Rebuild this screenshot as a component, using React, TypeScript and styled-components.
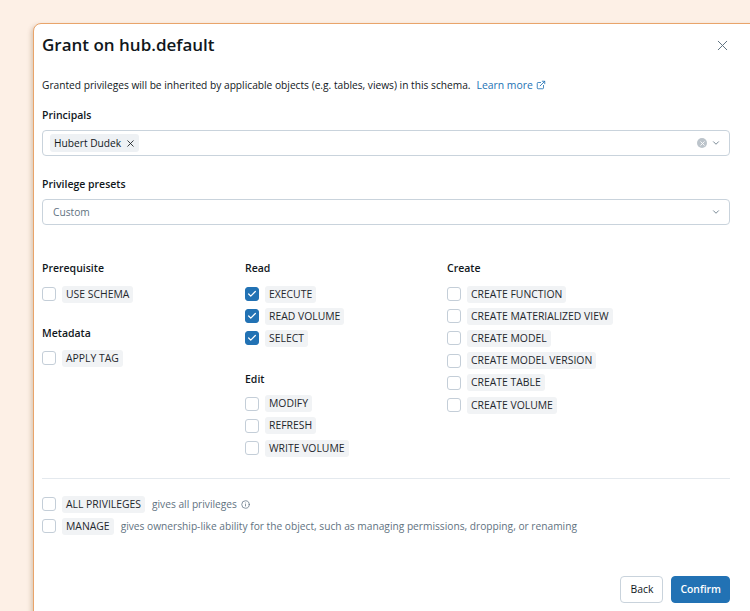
import React from "react";
import styled, { createGlobalStyle } from "styled-components";
import { X, ExternalLink, ChevronDown, Check, Info } from "lucide-react";

const GlobalStyle = createGlobalStyle`
  html, body {
    margin: 0;
    padding: 0;
    background: #fdf0e6;
    overflow: hidden;
  }
  body {
    font-family: "Open Sans", "Noto Sans", "Liberation Sans", sans-serif;
    color: #11171c;
    font-size: 11px;
  }
`;

const Modal = styled.div`
  margin: 23px 0 0 33px;
  width: 760px;
  height: 640px;
  box-sizing: border-box;
  padding: 9px 0 0 8px;
  background: #fff;
  border: 1px solid #e9a46a;
  border-radius: 8px;
  box-shadow: -2px 2px 4px rgba(120, 80, 40, 0.25);
`;

const Content = styled.div`
  width: 688px;
`;

const Header = styled.div`
  display: flex;
  align-items: center;
  justify-content: space-between;
  height: 24px;
`;

const Title = styled.h1`
  margin: 0;
  font-size: 17px;
  font-weight: 600;
  line-height: 24px;
  color: #11171c;
`;

const CloseButton = styled.button`
  border: none;
  background: none;
  padding: 0;
  display: flex;
  color: #5f7281;
  margin-right: -1px;
`;

const Description = styled.p`
  margin: 20px 0 0;
  line-height: 16px;
  font-size: 10.2px;
`;

const Link = styled.a`
  color: #2272b4;
  text-decoration: none;
  margin-left: 6px;
  display: inline-flex;
  align-items: center;
  gap: 3px;
  font-size: 10.4px;
`;

const Label = styled.div<{ $top: number }>`
  margin-top: ${(p) => p.$top}px;
  font-weight: 600;
  line-height: 16px;
  font-size: 10.5px;
`;

const Field = styled.div`
  margin-top: 7px;
  height: 26px;
  box-sizing: border-box;
  border: 1px solid #c9d3dc;
  border-radius: 4px;
  display: flex;
  align-items: center;
  padding: 0 8px 0 7px;
`;

const Chip = styled.span`
  display: inline-flex;
  align-items: center;
  gap: 4px;
  height: 18px;
  padding: 0 3px 0 4px;
  background: #eef1f4;
  border-radius: 3px;
  font-size: 10.2px;
`;

const Placeholder = styled.span`
  color: #5f7281;
  padding-left: 3px;
  font-size: 10.2px;
`;

const Icons = styled.span`
  margin-left: auto;
  display: flex;
  align-items: center;
  gap: 4px;
  color: #5f7281;
`;

const ClearDot = styled.span`
  width: 10px;
  height: 10px;
  border-radius: 50%;
  background: #bcc4cb;
  display: flex;
  align-items: center;
  justify-content: center;
  color: #fff;
`;

const Columns = styled.div`
  margin-top: 35px;
  display: grid;
  grid-template-columns: 203px 202px 1fr;
  align-items: start;
`;

const Group = styled.div<{ $top?: number }>`
  margin-top: ${(p) => p.$top ?? 0}px;
`;

const GroupTitle = styled.div<{ $gap: number }>`
  font-weight: 600;
  line-height: 16px;
  font-size: 10.5px;
  margin-bottom: ${(p) => p.$gap}px;
`;

const Row = styled.label`
  display: flex;
  align-items: center;
  gap: 6px;
  height: 22.2px;
`;

const Box = styled.span<{ $checked?: boolean }>`
  width: 14px;
  height: 14px;
  box-sizing: border-box;
  border-radius: 3px;
  border: 1px solid ${(p) => (p.$checked ? "#2272b4" : "#c4ced8")};
  background: ${(p) => (p.$checked ? "#2272b4" : "#fff")};
  display: flex;
  align-items: center;
  justify-content: center;
  color: #fff;
  flex-shrink: 0;
`;

const Tag = styled.span`
  background: #f1f3f5;
  border-radius: 3px;
  padding: 0 4px;
  height: 17px;
  line-height: 17px;
  font-size: 10.4px;
  color: #1f272d;
`;

const Hint = styled.span`
  color: #5f7281;
  font-size: 10.2px;
  display: inline-flex;
  align-items: center;
  gap: 4px;
  margin-left: 1px;
`;

const Divider = styled.hr`
  margin: 19px 0 14px;
  border: none;
  border-top: 1px solid #e4e9ee;
`;

const Footer = styled.div`
  margin-top: 38px;
  display: flex;
  justify-content: flex-end;
  gap: 8px;
`;

const Button = styled.button<{ $primary?: boolean }>`
  height: 27px;
  padding: 0 ${(p) => (p.$primary ? 8 : 9)}px;
  border-radius: 4px;
  font-family: inherit;
  font-size: 10.4px;
  border: 1px solid ${(p) => (p.$primary ? "#2272b4" : "#c9d3dc")};
  background: ${(p) => (p.$primary ? "#2272b4" : "#fff")};
  color: ${(p) => (p.$primary ? "#fff" : "#11171c")};
  font-weight: ${(p) => (p.$primary ? 600 : 400)};
`;

type Priv = { name: string; checked?: boolean };

function Priv({ name, checked }: Priv) {
  return (
    <Row>
      <Box $checked={checked}>{checked && <Check size={10} strokeWidth={3} />}</Box>
      <Tag>{name}</Tag>
    </Row>
  );
}

function PrivGroup({
  title,
  items,
  top,
  gap = 7,
}: {
  title: string;
  items: Priv[];
  top?: number;
  gap?: number;
}) {
  return (
    <Group $top={top}>
      <GroupTitle $gap={gap}>{title}</GroupTitle>
      {items.map((i) => (
        <Priv key={i.name} {...i} />
      ))}
    </Group>
  );
}

export default function App() {
  return (
    <>
      <GlobalStyle />
      <Modal>
        <Content>
          <Header>
            <Title>Grant on hub.default</Title>
            <CloseButton>
              <X size={17} strokeWidth={1.4} />
            </CloseButton>
          </Header>
          <Description>
            Granted privileges will be inherited by applicable objects (e.g. tables, views) in this
            schema.
            <Link>
              Learn more <ExternalLink size={10} />
            </Link>
          </Description>

          <Label $top={14}>Principals</Label>
          <Field>
            <Chip>
              Hubert Dudek <X size={11} strokeWidth={1.8} />
            </Chip>
            <Icons>
              <ClearDot>
                <X size={7} strokeWidth={3} />
              </ClearDot>
              <ChevronDown size={10} strokeWidth={2} />
            </Icons>
          </Field>

          <Label $top={20}>Privilege presets</Label>
          <Field>
            <Placeholder>Custom</Placeholder>
            <Icons>
              <ChevronDown size={10} strokeWidth={2} />
            </Icons>
          </Field>

          <Columns>
            <div>
              <PrivGroup title="Prerequisite" items={[{ name: "USE SCHEMA" }]} />
              <PrivGroup title="Metadata" top={20} gap={6} items={[{ name: "APPLY TAG" }]} />
            </div>
            <div>
              <PrivGroup
                title="Read"
                items={[
                  { name: "EXECUTE", checked: true },
                  { name: "READ VOLUME", checked: true },
                  { name: "SELECT", checked: true },
                ]}
              />
              <PrivGroup
                title="Edit"
                top={21}
                gap={6}
                items={[{ name: "MODIFY" }, { name: "REFRESH" }, { name: "WRITE VOLUME" }]}
              />
            </div>
            <PrivGroup
              title="Create"
              items={[
                { name: "CREATE FUNCTION" },
                { name: "CREATE MATERIALIZED VIEW" },
                { name: "CREATE MODEL" },
                { name: "CREATE MODEL VERSION" },
                { name: "CREATE TABLE" },
                { name: "CREATE VOLUME" },
              ]}
            />
          </Columns>

          <Divider />

          <Row>
            <Box />
            <Tag>ALL PRIVILEGES</Tag>
            <Hint>
              gives all privileges <Info size={9} />
            </Hint>
          </Row>
          <Row>
            <Box />
            <Tag>MANAGE</Tag>
            <Hint>
              gives ownership-like ability for the object, such as managing permissions, dropping, or
              renaming
            </Hint>
          </Row>

          <Footer>
            <Button>Back</Button>
            <Button $primary>Confirm</Button>
          </Footer>
        </Content>
      </Modal>
    </>
  );
}
